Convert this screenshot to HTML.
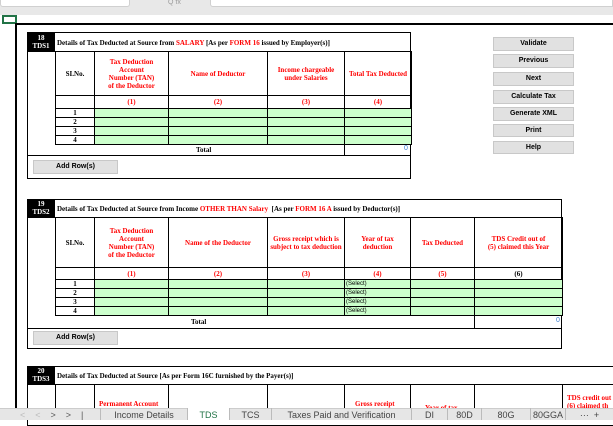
<!DOCTYPE html>
<html><head><meta charset="utf-8"><style>
*{margin:0;padding:0;box-sizing:border-box}
body{width:613px;height:420px;overflow:hidden;background:#fff;position:relative;font-family:"Liberation Serif",serif}
.a{position:absolute}
.box{position:absolute;border:1px solid #000}
.blk{position:absolute;background:#000;color:#fff;font-weight:bold;font-size:7px;line-height:8px;text-align:center;padding-top:1px}
.ttl{position:absolute;font-size:7px;font-weight:bold;color:#000;white-space:nowrap}
.r{color:#f00}
table{position:absolute;border-collapse:collapse;table-layout:fixed}
td{border:1px solid #000;font-size:7px;font-weight:bold;text-align:center;vertical-align:middle;line-height:8px;padding:0;overflow:hidden}
td.h{color:#f00;padding:0 8px}
tr.g td{background:#ccffcc}
tr.g td.n{background:#fff;color:#000;font-size:7px;line-height:7px}
td.sel{text-align:left;font-family:"Liberation Sans",sans-serif;font-weight:normal;font-size:6px;color:#000;padding:0 1px}
.btn{position:absolute;background:#e1e1e1;border:1px solid #c8c8c8;font-family:"Liberation Sans",sans-serif;font-weight:bold;font-size:7px;text-align:center;color:#000}
.tab{position:absolute;top:408px;height:12px;font-family:"Liberation Sans",sans-serif;font-size:9px;color:#444;text-align:center;border-right:1px solid #bbb;line-height:14px;white-space:nowrap;overflow:hidden}
</style></head><body>
<div class="a" style="left:0;top:0;width:613px;height:15px;background:#e8e8e8"></div>
<div class="a" style="left:0;top:0;width:130px;height:7px;background:#fff;border:1px solid #d0d0d0;border-top:none;border-radius:0 0 3px 3px"></div>
<div class="a" style="left:210px;top:0;width:403px;height:7px;background:#fff;border:1px solid #d0d0d0;border-top:none;border-radius:0 0 0 3px"></div>
<div class="a" style="left:168px;top:0;font-size:7px;color:#999;font-family:'Liberation Sans',sans-serif;line-height:5px">Q fx</div>
<div class="a" style="left:2px;top:15px;width:15px;height:9px;border:2px solid #217346"></div>
<div class="a" style="left:16px;top:23px;width:597px;height:2px;background:#000"></div>
<div class="a" style="left:15px;top:23px;width:2px;height:397px;background:#000"></div>

<div class="box" style="left:27px;top:32px;width:384px;height:147px"></div>
<div class="blk" style="left:27px;top:33px;width:28px;height:19px">18<br>TDS1</div>
<div class="ttl" style="left:57px;top:39px">Details of Tax Deducted at Source from <span class="r">SALARY</span> [As per <span class="r">FORM 16</span> issued by Employer(s)]</div>
<div class="a" style="left:27px;top:51px;width:384px;height:1px;background:#000"></div>
<table style="left:55px;top:51px;width:356px">
<col style="width:39px"><col style="width:74px"><col style="width:99px"><col style="width:77px"><col style="width:67px">
<tr style="height:44px"><td>SI.No.</td><td class="h" style="padding:0 12px">Tax Deduction Account Number (TAN) of the Deductor</td><td class="h">Name of Deductor</td><td class="h">Income chargeable under Salaries</td><td class="h" style="padding:0">Total Tax Deducted</td></tr>
<tr style="height:13px"><td></td><td class="h">(1)</td><td class="h">(2)</td><td class="h">(3)</td><td class="h">(4)</td></tr>
<tr class="g" style="height:9px"><td class="n">1</td><td></td><td></td><td></td><td></td></tr>
<tr class="g" style="height:9px"><td class="n">2</td><td></td><td></td><td></td><td></td></tr>
<tr class="g" style="height:9px"><td class="n">3</td><td></td><td></td><td></td><td></td></tr>
<tr class="g" style="height:9px"><td class="n">4</td><td></td><td></td><td></td><td></td></tr>
</table>
<div class="ttl" style="left:196px;top:146px">Total</div>
<div class="a" style="left:344px;top:144px;width:1px;height:12px;background:#000"></div>
<div class="a" style="left:27px;top:155px;width:384px;height:1px;background:#000"></div>
<div class="a" style="left:404px;top:145px;font-size:7px;color:#3a7fd0;font-family:'Liberation Sans',sans-serif">0</div>
<div class="btn" style="left:33px;top:160px;width:85px;height:14px;line-height:12px">Add Row(s)</div>

<div class="btn" style="left:493px;top:37px;width:81px;height:14px;line-height:12px">Validate</div>
<div class="btn" style="left:493px;top:54px;width:81px;height:14px;line-height:12px">Previous</div>
<div class="btn" style="left:493px;top:72px;width:81px;height:14px;line-height:12px">Next</div>
<div class="btn" style="left:493px;top:90px;width:81px;height:14px;line-height:12px">Calculate Tax</div>
<div class="btn" style="left:493px;top:107px;width:81px;height:14px;line-height:12px">Generate XML</div>
<div class="btn" style="left:493px;top:124px;width:81px;height:13px;line-height:11px">Print</div>
<div class="btn" style="left:493px;top:141px;width:81px;height:13px;line-height:11px">Help</div>

<div class="box" style="left:27px;top:199px;width:535px;height:150px"></div>
<div class="blk" style="left:27px;top:199px;width:28px;height:18px">19<br>TDS2</div>
<div class="ttl" style="left:57px;top:205px">Details of Tax Deducted at Source from Income <span class="r">OTHER THAN Salary</span> &nbsp;[As per <span class="r">FORM 16 A</span> issued by Deductor(s)]</div>
<div class="a" style="left:27px;top:217px;width:535px;height:1px;background:#000"></div>
<table style="left:55px;top:217px;width:507px">
<col style="width:39px"><col style="width:74px"><col style="width:99px"><col style="width:77px"><col style="width:66px"><col style="width:64px"><col style="width:88px">
<tr style="height:50px"><td>SI.No.</td><td class="h" style="padding:0 12px">Tax Deduction Account Number (TAN) of the Deductor</td><td class="h">Name of the Deductor</td><td class="h" style="padding:0 2px">Gross receipt which is subject to tax deduction</td><td class="h" style="padding:0 12px">Year of tax deduction</td><td class="h">Tax Deducted</td><td class="h" style="padding:0 12px">TDS Credit out of (5) claimed this Year</td></tr>
<tr style="height:12px"><td></td><td class="h">(1)</td><td class="h">(2)</td><td class="h">(3)</td><td class="h">(4)</td><td class="h">(5)</td><td>(6)</td></tr>
<tr class="g" style="height:9px"><td class="n">1</td><td></td><td></td><td></td><td class="sel">(Select)</td><td></td><td></td></tr>
<tr class="g" style="height:9px"><td class="n">2</td><td></td><td></td><td></td><td class="sel">(Select)</td><td></td><td></td></tr>
<tr class="g" style="height:9px"><td class="n">3</td><td></td><td></td><td></td><td class="sel">(Select)</td><td></td><td></td></tr>
<tr class="g" style="height:9px"><td class="n">4</td><td></td><td></td><td></td><td class="sel">(Select)</td><td></td><td></td></tr>
</table>
<div class="ttl" style="left:191px;top:318px">Total</div>
<div class="a" style="left:474px;top:316px;width:1px;height:13px;background:#000"></div>
<div class="a" style="left:27px;top:328px;width:535px;height:1px;background:#000"></div>
<div class="a" style="left:556px;top:317px;font-size:7px;color:#3a7fd0;font-family:'Liberation Sans',sans-serif">0</div>
<div class="btn" style="left:33px;top:331px;width:85px;height:14px;line-height:12px">Add Row(s)</div>

<div class="box" style="left:27px;top:366px;width:600px;height:60px"></div>
<div class="blk" style="left:27px;top:366px;width:28px;height:18px">20<br>TDS3</div>
<div class="ttl" style="left:57px;top:372px">Details of Tax Deducted at Source [As per Form 16C furnished by the Payer(s)]</div>
<div class="a" style="left:27px;top:384px;width:600px;height:1px;background:#000"></div>
<div class="a" style="left:55px;top:384px;width:1px;height:30px;background:#000"></div>
<div class="a" style="left:94px;top:384px;width:1px;height:30px;background:#000"></div>
<div class="a" style="left:168px;top:384px;width:1px;height:30px;background:#000"></div>
<div class="a" style="left:267px;top:384px;width:1px;height:30px;background:#000"></div>
<div class="a" style="left:344px;top:384px;width:1px;height:30px;background:#000"></div>
<div class="a" style="left:410px;top:384px;width:1px;height:30px;background:#000"></div>
<div class="a" style="left:474px;top:384px;width:1px;height:30px;background:#000"></div>
<div class="a" style="left:562px;top:384px;width:1px;height:30px;background:#000"></div>
<div class="ttl r" style="left:99px;top:400px">Permanent Account</div>
<div class="ttl r" style="left:355px;top:400px">Gross receipt</div>
<div class="ttl r" style="left:425px;top:404px">Year of tax</div>
<div class="ttl r" style="left:567px;top:394px">TDS credit out<br>(6) claimed th</div>

<div class="a" style="left:0;top:408px;width:613px;height:12px;background:#e6e6e6;border-top:1px solid #ccc"></div>
<div class="a" style="left:20px;top:408px;font-size:9px;color:#bbb;font-family:'Liberation Sans',sans-serif;line-height:14px;letter-spacing:10px">&lt;&lt;<span style="color:#555">&gt;&gt;|</span></div>
<div class="tab" style="left:100px;width:88px;border-left:1px solid #bbb">Income Details</div>
<div class="tab" style="left:188px;width:42px;background:#fff;color:#217346">TDS</div>
<div class="tab" style="left:230px;width:42px">TCS</div>
<div class="tab" style="left:272px;width:140px">Taxes Paid and Verification</div>
<div class="tab" style="left:412px;width:36px">DI</div>
<div class="tab" style="left:448px;width:34px">80D</div>
<div class="tab" style="left:482px;width:49px">80G</div>
<div class="tab" style="left:531px;width:35px">80GGA</div>
<div class="tab" style="left:566px;width:47px;border:none">···&nbsp; +</div>
</body></html>
